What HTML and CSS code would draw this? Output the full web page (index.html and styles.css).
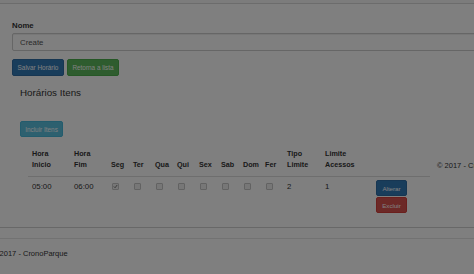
FILE: index.html
```html
<!DOCTYPE html>
<html lang="pt-BR">
<head>
    <meta charset="UTF-8">
    <title>Horários - CronoParque</title>
    <link rel="stylesheet" href="styles.css">
</head>
<body>
<div class="navbar"></div>

<div class="container">
    <div class="form-group">
        <label class="control-label">Nome</label>
        <input class="form-control" type="text" value="Create">
    </div>

    <div class="form-actions">
        <button class="btn btn-primary">Salvar Horário</button>
        <button class="btn btn-success">Retorna a lista</button>
    </div>

    <div class="itens">
        <h4>Horários Itens</h4>
        <button class="btn btn-info">Incluir Itens</button>

        <div class="itens-row">
            <table class="table">
                <thead>
                <tr>
                    <th class="c-ini">Hora<br>Inicio</th>
                    <th class="c-fim">Hora<br>Fim</th>
                    <th class="c-dia">Seg</th>
                    <th class="c-dia">Ter</th>
                    <th class="c-dia">Qua</th>
                    <th class="c-dia">Qui</th>
                    <th class="c-dia">Sex</th>
                    <th class="c-dia">Sab</th>
                    <th class="c-dia">Dom</th>
                    <th class="c-dia">Fer</th>
                    <th class="c-tipo">Tipo<br>Limite</th>
                    <th class="c-lim">Limite<br>Acessos</th>
                    <th class="c-acoes"></th>
                </tr>
                </thead>
                <tbody>
                <tr>
                    <td>05:00</td>
                    <td>06:00</td>
                    <td><span class="chk"><svg viewBox="0 0 6 6"><polyline points="1,3 2.5,4.5 5,1.2"/></svg></span></td>
                    <td><span class="chk"></span></td>
                    <td><span class="chk"></span></td>
                    <td><span class="chk"></span></td>
                    <td><span class="chk"></span></td>
                    <td><span class="chk"></span></td>
                    <td><span class="chk"></span></td>
                    <td><span class="chk"></span></td>
                    <td>2</td>
                    <td>1</td>
                    <td class="acoes">
                        <button class="btn btn-primary btn-xs">Alterar</button>
                        <button class="btn btn-danger btn-xs">Excluir</button>
                    </td>
                </tr>
                </tbody>
            </table>
            <div class="side-footer">&copy; 2017 - CronoParque</div>
        </div>
    </div>
</div>

<hr class="sep">
<hr class="sep sep-2">
<footer class="footer">&copy; 2017 - CronoParque</footer>

<div class="backdrop"></div>
</body>
</html>
```

FILE: styles.css
```css
body {
    margin: 0;
    font-family: 'Liberation Sans', Arial, sans-serif;
    font-size: 7.5px;
    color: #333;
    background: #fff;
    overflow: hidden;
}

.navbar {
    height: 3px;
    background: #f8f8f8;
    border-bottom: 1px solid #d8d8d8;
}

.container {
    padding: 0 0 0 12px;
}

.form-group {
    padding-top: 17px;
}

.control-label {
    display: block;
    font-weight: bold;
    font-size: 7.8px;
    margin-bottom: 3px;
}

.form-control {
    display: block;
    box-sizing: border-box;
    width: 480px;
    height: 18px;
    margin: 0;
    padding: 0 7px;
    border: 1px solid #ccc;
    border-radius: 2px;
    font-family: inherit;
    font-size: 7.8px;
    color: #555;
    box-shadow: inset 0 1px 1px rgba(0,0,0,0.075);
}

.form-actions {
    display: flex;
    gap: 3px;
    margin-top: 8px;
}

.btn {
    box-sizing: border-box;
    height: 17px;
    padding: 0 6px;
    border: 1px solid transparent;
    border-radius: 2px;
    font-family: inherit;
    font-size: 6.4px;
    color: #fff;
    cursor: pointer;
}

.btn-primary {
    background: #337ab7;
    border-color: #2e6da4;
}

.btn-success {
    background: #5cb85c;
    border-color: #4cae4c;
}

.btn-info {
    background: #5bc0de;
    border-color: #46b8da;
    height: 16px;
}

.btn-danger {
    background: #d9534f;
    border-color: #d43f3a;
}

.form-actions .btn {
    width: 52px;
    padding: 0;
}

.itens {
    padding-left: 8px;
}

.itens h4 {
    margin: 10px 0 0;
    font-size: 9.8px;
    font-weight: normal;
    line-height: 14px;
}

.itens .btn-info {
    margin-top: 21px;
    width: 43px;
    padding: 0;
}

.itens-row {
    display: flex;
    align-items: flex-start;
    margin-top: 11px;
}

.table {
    flex-shrink: 0;
    margin-left: 8px;
    border-collapse: collapse;
    table-layout: fixed;
    width: 402px;
}

.table th {
    text-align: left;
    vertical-align: bottom;
    font-weight: bold;
    font-size: 7.2px;
    line-height: 11px;
    padding: 0 4px 6px;
    border-bottom: 1px solid #ddd;
}

.table td {
    vertical-align: top;
    padding: 4px 4px 0;
    font-size: 7.8px;
    line-height: 11px;
}

.chk {
    display: inline-block;
    box-sizing: border-box;
    width: 7px;
    height: 7px;
    margin: 2px 0 0 1px;
    border: 1px solid #c4c4c4;
    border-radius: 1px;
    background: #efefef;
    vertical-align: top;
}

.chk svg {
    display: block;
    width: 5px;
    height: 5px;
    fill: none;
    stroke: #777;
    stroke-width: 1.2;
}

.c-ini { width: 34px; }
.c-fim { width: 29px; }
.c-dia { width: 14px; }
.c-tipo { width: 30px; }
.c-lim { width: 42px; }

.table td.acoes {
    display: flex;
    flex-direction: column;
    align-items: flex-start;
    gap: 1px;
    padding: 3px 0 0 5px;
}

.table .btn-xs {
    height: 16px;
    width: 31px;
    padding: 0;
    font-size: 6.2px;
}

.side-footer {
    margin-left: 7px;
    margin-top: 13px;
    white-space: nowrap;
}

.sep {
    margin: 14px 0 0;
    border: 0;
    border-top: 1px solid #d0d0d0;
}

.sep-2 {
    margin-top: 10px;
    border-top-color: #e4e4e4;
}

.footer {
    margin: 9px 0 0 -8px;
    line-height: 11px;
}

.backdrop {
    position: fixed;
    top: 0;
    left: 0;
    right: 0;
    bottom: 0;
    background: rgba(0,0,0,0.5);
}
```
